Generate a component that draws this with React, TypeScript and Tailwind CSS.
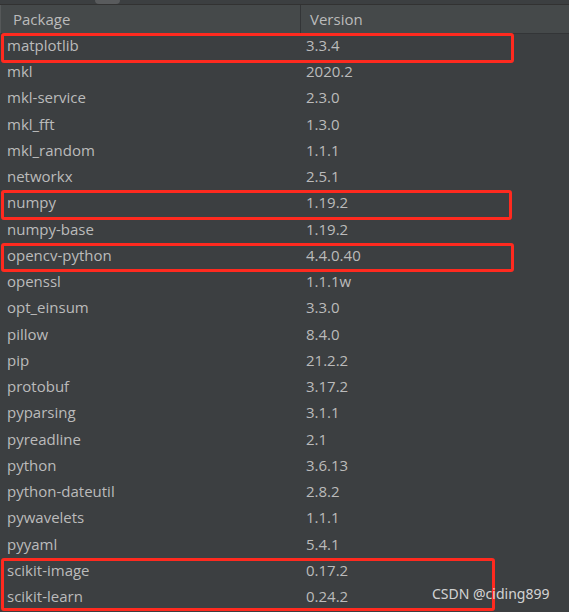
const packages: [string, string][] = [
  ["matplotlib", "3.3.4"],
  ["mkl", "2020.2"],
  ["mkl-service", "2.3.0"],
  ["mkl_fft", "1.3.0"],
  ["mkl_random", "1.1.1"],
  ["networkx", "2.5.1"],
  ["numpy", "1.19.2"],
  ["numpy-base", "1.19.2"],
  ["opencv-python", "4.4.0.40"],
  ["openssl", "1.1.1w"],
  ["opt_einsum", "3.3.0"],
  ["pillow", "8.4.0"],
  ["pip", "21.2.2"],
  ["protobuf", "3.17.2"],
  ["pyparsing", "3.1.1"],
  ["pyreadline", "2.1"],
  ["python", "3.6.13"],
  ["python-dateutil", "2.8.2"],
  ["pywavelets", "1.1.1"],
  ["pyyaml", "5.4.1"],
  ["scikit-image", "0.17.2"],
  ["scikit-learn", "0.24.2"],
];

export default function App() {
  return (
    <div
      className="relative w-[569px] h-[612px] overflow-hidden bg-[#3c3f41] text-[15px] text-[#bbbbbb]"
      style={{ fontFamily: '"Open Sans", "Noto Sans", sans-serif' }}
    >
      <div className="h-[5px] bg-[#3c3f41] border-b border-[#323232]">
        <div className="ml-[95px] w-[25px] h-[4px] rounded-b bg-[#595b5d]" />
      </div>
      <div className="flex h-[29px] bg-[#45494a] border-b border-[#333537] border-l border-l-[#555859]">
        <div className="w-[300px] flex items-center pl-[12px] pt-[1px] border-r border-[#333537]">
          Package
        </div>
        <div className="flex items-center pl-[9px] pt-[1px]">Version</div>
      </div>
      <div className="flex flex-col -mt-[1px]">
        {packages.map(([name, version]) => (
          <div key={name} className="flex h-[26.25px] items-center pb-[2px]">
            <div className="w-[301px] pl-[7px]">{name}</div>
            <div className="pl-[5px]">{version}</div>
          </div>
        ))}
      </div>

      {/* highlight boxes drawn over the table */}
      <div className="absolute left-[1px] top-[33px] w-[513px] h-[30px] border-[3px] border-[#ff2a1f] rounded-[3px]" />
      <div className="absolute left-[1px] top-[190px] w-[511px] h-[30px] border-[3px] border-[#ff2a1f] rounded-[3px]" />
      <div className="absolute left-[1px] top-[243px] w-[513px] h-[29px] border-[3px] border-[#ff2a1f] rounded-[3px]" />
      <div className="absolute left-[1px] top-[558px] w-[494px] h-[53px] border-[3px] border-[#ff2a1f] rounded-[3px]" />

      <div
        className="absolute left-[432px] top-[583px] text-[14px] text-[#e6e6e6]/90"
        style={{ fontFamily: '"Noto Sans", sans-serif' }}
      >
        CSDN @ciding899
      </div>
    </div>
  );
}
